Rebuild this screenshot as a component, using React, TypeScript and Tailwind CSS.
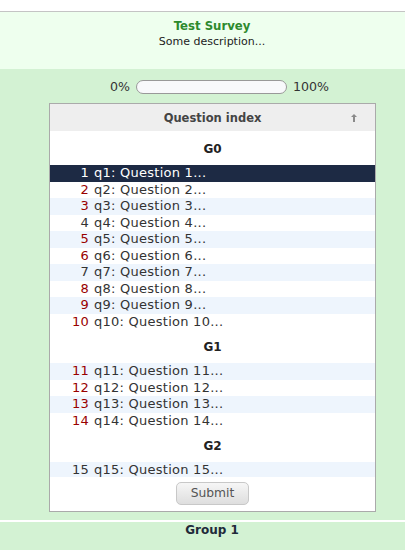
import React from "react";

type Question = { n: number; answered: boolean };

const groups: { name: string; questions: Question[] }[] = [
  {
    name: "G0",
    questions: [
      { n: 1, answered: false },
      { n: 2, answered: false },
      { n: 3, answered: false },
      { n: 4, answered: true },
      { n: 5, answered: false },
      { n: 6, answered: false },
      { n: 7, answered: true },
      { n: 8, answered: false },
      { n: 9, answered: false },
      { n: 10, answered: false },
    ],
  },
  {
    name: "G1",
    questions: [
      { n: 11, answered: false },
      { n: 12, answered: false },
      { n: 13, answered: false },
      { n: 14, answered: false },
    ],
  },
  {
    name: "G2",
    questions: [{ n: 15, answered: true }],
  },
];

function SortArrow() {
  return (
    <svg width="6" height="8" viewBox="0 0 6 8" className="block">
      <path d="M3 0 L6 3 L0 3 Z" fill="#8a8a8a" />
      <rect x="2" y="3" width="2" height="5" fill="#8a8a8a" />
    </svg>
  );
}

function QuestionRow({ q, striped, active }: { q: Question; striped: boolean; active: boolean }) {
  const bg = active ? "bg-[#1d2a44]" : striped ? "bg-[#eef5fd]" : "bg-white";
  const numColor = active ? "text-white" : q.answered ? "text-[#333]" : "text-[#990000]";
  return (
    <div className={`flex h-[16.5px] items-center leading-[16.5px] ${bg}`}>
      <span className={`w-[39px] text-right ${numColor}`}>{q.n}</span>
      <span className={`pl-[5px] ${active ? "text-white" : "text-[#333]"}`}>
        q{q.n}: Question {q.n}...
      </span>
    </div>
  );
}

export default function App() {
  return (
    <div
      className="min-h-[550px] overflow-hidden bg-[#d3f2d3] text-[13px] tracking-[0.25px]"
      style={{ fontFamily: '"DejaVu Sans", Verdana, sans-serif' }}
    >
      {/* Survey header */}
      <div className="h-[11px] bg-white" />
      <div className="h-[58px] border-t border-[#c4c4c4] bg-[#eeffee] pl-[19px] pt-[6px] text-center">
        <div className="text-[11.7px] font-bold leading-[16px] tracking-normal text-[#2d8a2d]">
          Test Survey
        </div>
        <div className="text-[11px] leading-[15px] tracking-normal text-[#222]">
          Some description...
        </div>
      </div>

      {/* Progress */}
      <div className="mt-[11px] flex h-[14px] items-center justify-center gap-[6px] pl-[34px] text-[12.6px] tracking-normal text-[#333]">
        <span>0%</span>
        <div className="h-[14px] w-[151px] rounded-[7px] border border-[#999] bg-[#f8f9fb]" />
        <span>100%</span>
      </div>

      {/* Question index panel */}
      <div className="ml-[49px] mt-[9px] w-[327px] border border-[#aaa] bg-white pb-[6px]">
        <div className="relative flex h-[27px] items-center justify-center bg-[#eeeeee] pt-[2px] text-[11.5px] font-bold tracking-normal text-[#444]">
          Question index
          <span className="absolute right-[18px] top-[10px]">
            <SortArrow />
          </span>
        </div>
        <div className="h-[346px] overflow-hidden pt-[1px]">
          {groups.map((g) => (
            <div key={g.name}>
              <div className="flex h-[33px] items-center justify-center text-[12px] font-bold tracking-normal text-[#222]">
                {g.name}
              </div>
              {g.questions.map((q, i) => (
                <QuestionRow key={q.n} q={q} striped={i % 2 === 0} active={q.n === 1} />
              ))}
            </div>
          ))}
        </div>
        <div className="mt-[5px] flex justify-center">
          <button className="h-[23px] w-[73px] rounded-[5px] border border-[#c8c8c8] bg-gradient-to-b from-[#f6f6f6] to-[#dedede] text-[12.3px] tracking-normal text-[#555]">
            Submit
          </button>
        </div>
      </div>

      {/* Next group */}
      <div className="mt-[8px] border-t-2 border-white pl-[19px] text-center text-[12px] font-bold leading-[16px] tracking-normal text-[#1f2a3a]">
        Group 1
      </div>
    </div>
  );
}
